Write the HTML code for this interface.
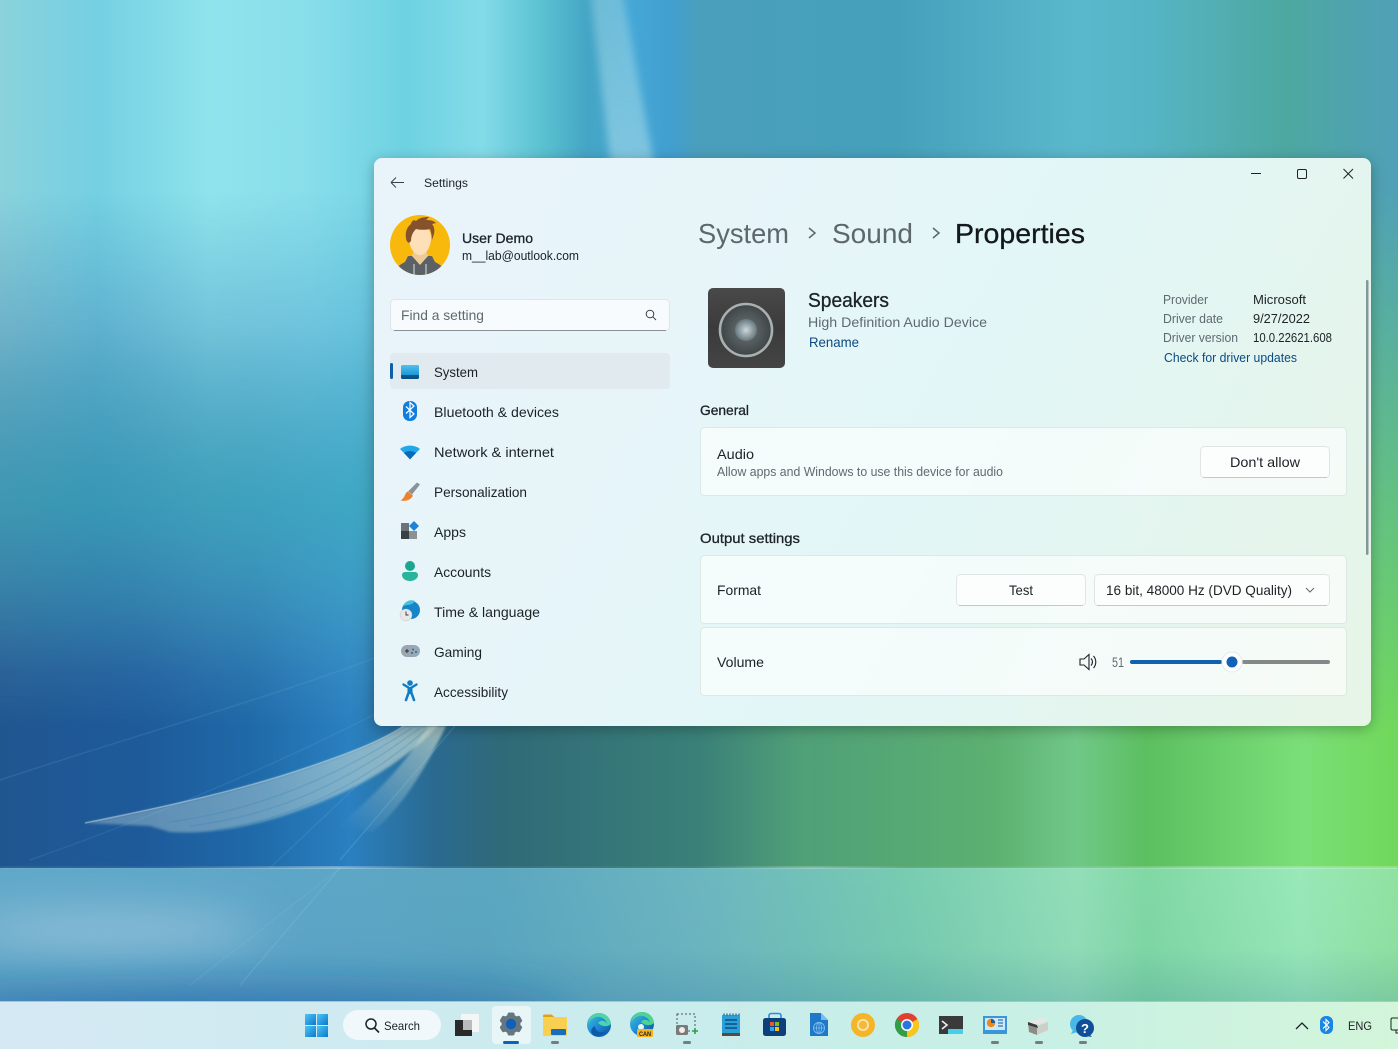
<!DOCTYPE html>
<html lang="en"><head><meta charset="utf-8"><title>Settings</title>
<style>
html,body{margin:0;padding:0;width:1398px;height:1049px;overflow:hidden;background:#3a8fb0}
svg{display:block}
text{font-family:"Liberation Sans",sans-serif;font-size:14px;fill:#1c2226}
.n{font-size:14px}
.s{stroke:#1c2226;stroke-width:.3px}
.g{fill:#5f6a70}
.m{font-size:12.5px}
.l{fill:#0b4a82}
.h{font-size:28px}
</style></head><body>
<svg width="1398" height="1049" viewBox="0 0 1398 1049" xmlns="http://www.w3.org/2000/svg">
<defs>
<linearGradient id="top" gradientUnits="userSpaceOnUse" x1="0" y1="0" x2="1398" y2="0">
<stop offset="0" stop-color="#8ad2dc"/><stop offset=".07" stop-color="#74d0e2"/><stop offset=".15" stop-color="#8fe4ec"/><stop offset=".22" stop-color="#88deea"/><stop offset=".29" stop-color="#6ed2e2"/><stop offset=".345" stop-color="#84dbe8"/><stop offset=".39" stop-color="#58c0d0"/><stop offset=".42" stop-color="#45a5c5"/><stop offset=".45" stop-color="#45a8d6"/><stop offset=".48" stop-color="#429fd0"/><stop offset=".5" stop-color="#4a9fbc"/><stop offset=".64" stop-color="#45a0bb"/><stop offset=".77" stop-color="#5ab8cc"/><stop offset=".82" stop-color="#56b5c5"/><stop offset=".92" stop-color="#4da8a0"/><stop offset="1" stop-color="#50a0b8"/>
</linearGradient>
<linearGradient id="bot" gradientUnits="userSpaceOnUse" x1="0" y1="0" x2="1398" y2="0">
<stop offset="0" stop-color="#205690"/><stop offset=".1" stop-color="#1e5a9a"/><stop offset=".18" stop-color="#1f69a8"/><stop offset=".25" stop-color="#2a80c0"/><stop offset=".31" stop-color="#2a6a90"/><stop offset=".36" stop-color="#2f6a78"/><stop offset=".5" stop-color="#3a8078"/><stop offset=".57" stop-color="#4f9f78"/><stop offset=".71" stop-color="#5cb070"/><stop offset=".77" stop-color="#70c888"/><stop offset=".82" stop-color="#5cbf60"/><stop offset=".93" stop-color="#7adf78"/><stop offset="1" stop-color="#70d85a"/>
</linearGradient>
<linearGradient id="lowr" gradientUnits="userSpaceOnUse" x1="0" y1="0" x2="1398" y2="0">
<stop offset="0" stop-color="#60a8c8"/><stop offset=".2" stop-color="#5ea6c8"/><stop offset=".35" stop-color="#5ba6c0"/><stop offset=".5" stop-color="#6cb6c0"/><stop offset=".65" stop-color="#78ccb0"/><stop offset=".77" stop-color="#92deb8"/><stop offset=".82" stop-color="#80d8a4"/><stop offset=".93" stop-color="#98e8b8"/><stop offset="1" stop-color="#90e2a0"/>
</linearGradient>
<linearGradient id="fade" x1="0" y1="0" x2="0" y2="1"><stop offset=".22" stop-color="#fff"/><stop offset=".84" stop-color="#000"/></linearGradient>
<mask id="mk" maskUnits="userSpaceOnUse" x="0" y="0" width="1398" height="868"><rect width="1398" height="868" fill="url(#fade)"/></mask>
<linearGradient id="lowv" x1="0" y1="0" x2="0" y2="1"><stop offset="0" stop-color="#0a4a90" stop-opacity="0"/><stop offset=".6" stop-color="#0a4a90" stop-opacity=".02"/><stop offset="1" stop-color="#0a4a90" stop-opacity=".16"/></linearGradient>
<linearGradient id="hz" gradientUnits="userSpaceOnUse" x1="0" y1="0" x2="1398" y2="0"><stop offset="0" stop-color="#fff" stop-opacity=".12"/><stop offset=".12" stop-color="#fff" stop-opacity=".12"/><stop offset=".24" stop-color="#fff" stop-opacity=".7"/><stop offset=".31" stop-color="#fff" stop-opacity=".12"/><stop offset=".5" stop-color="#fff" stop-opacity=".1"/><stop offset=".58" stop-color="#fff" stop-opacity=".5"/><stop offset=".65" stop-color="#fff" stop-opacity=".1"/><stop offset=".77" stop-color="#fff" stop-opacity=".15"/><stop offset=".85" stop-color="#fff" stop-opacity=".5"/><stop offset="1" stop-color="#fff" stop-opacity=".45"/></linearGradient>
<linearGradient id="win" gradientUnits="userSpaceOnUse" x1="374" y1="158" x2="1371" y2="726"><stop offset="0" stop-color="#e8f4fa"/><stop offset=".3" stop-color="#e7f5f9"/><stop offset=".55" stop-color="#e2f6f7"/><stop offset=".85" stop-color="#e5f5ec"/><stop offset="1" stop-color="#e6f5e6"/></linearGradient>
<linearGradient id="tb" gradientUnits="userSpaceOnUse" x1="0" y1="0" x2="1398" y2="0"><stop offset="0" stop-color="#d5e9f4"/><stop offset=".5" stop-color="#c9ecec"/><stop offset=".75" stop-color="#c8f0e4"/><stop offset="1" stop-color="#d3f5da"/></linearGradient>
<linearGradient id="wing" gradientUnits="userSpaceOnUse" x1="90" y1="825" x2="430" y2="730"><stop offset="0" stop-color="#b0ccd4" stop-opacity=".4"/><stop offset=".5" stop-color="#a8c8d0" stop-opacity=".55"/><stop offset="1" stop-color="#c4d8d0" stop-opacity=".72"/></linearGradient>
<linearGradient id="wing2" gradientUnits="userSpaceOnUse" x1="350" y1="825" x2="440" y2="730"><stop offset="0" stop-color="#c0e0e8" stop-opacity=".02"/><stop offset="1" stop-color="#d0e0d0" stop-opacity=".65"/></linearGradient>
<linearGradient id="midv" x1="0" y1="0" x2="0" y2="1"><stop offset="0" stop-color="#2ca8b4" stop-opacity="0"/><stop offset=".5" stop-color="#2ca8b4" stop-opacity=".45"/><stop offset="1" stop-color="#2ca8b4" stop-opacity="0"/></linearGradient>
<linearGradient id="stk" x1="0" y1="0" x2="0" y2="1"><stop offset="0" stop-color="#a8dbe8" stop-opacity=".4"/><stop offset="1" stop-color="#a8dbe8" stop-opacity=".6"/></linearGradient>
<filter id="b2"><feGaussianBlur stdDeviation="1.2"/></filter>
<filter id="b4" x="-80%" y="-5%" width="260%" height="110%"><feGaussianBlur stdDeviation="4"/></filter>
<filter id="b30" x="-30%" y="-150%" width="160%" height="400%"><feGaussianBlur stdDeviation="22"/></filter>
<filter id="sh" x="-5%" y="-5%" width="110%" height="112%"><feDropShadow dx="0" dy="3" stdDeviation="7" flood-color="#000" flood-opacity=".28"/></filter>
<radialGradient id="cone" cx=".5" cy=".5" r=".5"><stop offset="0" stop-color="#ccd8dc"/><stop offset="1" stop-color="#67787e"/></radialGradient>
<radialGradient id="spk" cx=".5" cy=".5" r=".5"><stop offset="0" stop-color="#6b7477"/><stop offset="1" stop-color="#3f4446"/></radialGradient>
<linearGradient id="spb" x1="0" y1="0" x2="0" y2="1"><stop offset="0" stop-color="#4a4949"/><stop offset=".5" stop-color="#3c3b3b"/><stop offset="1" stop-color="#444"/></linearGradient>
<linearGradient id="sys" x1="0" y1="0" x2="0" y2="1"><stop offset="0" stop-color="#4cc2ec"/><stop offset=".72" stop-color="#1f97d6"/><stop offset=".73" stop-color="#0d5a97"/><stop offset="1" stop-color="#0b4c82"/></linearGradient>
<linearGradient id="win11" x1="0" y1="0" x2="1" y2="1"><stop offset="0" stop-color="#4ec6f2"/><stop offset="1" stop-color="#0b78d0"/></linearGradient>
<linearGradient id="edge" x1="0" y1="0" x2="1" y2="1"><stop offset="0" stop-color="#45c7d0"/><stop offset=".5" stop-color="#1c8bd8"/><stop offset="1" stop-color="#0a4f9e"/></linearGradient>
</defs>

<!-- wallpaper -->
<rect width="1398" height="868" fill="url(#bot)"/>
<rect width="1398" height="868" fill="url(#top)" mask="url(#mk)"/>
<rect x="0" y="330" width="400" height="340" fill="url(#midv)"/>
<path d="M590 -10 L622 -10 L656 175 L612 175 Z" fill="url(#stk)" filter="url(#b4)"/>
<path d="M0 780 C150 730 300 690 420 640" stroke="#6ab8e0" stroke-opacity=".16" fill="none" stroke-width="1.5"/>
<path d="M30 860 C200 800 330 740 440 680" stroke="#6ab8e0" stroke-opacity=".14" fill="none" stroke-width="1.5"/>
<!-- wings -->
<path d="M85 823 C170 806 240 790 300 770 C345 755 380 742 404 726 L438 726 C410 755 370 785 300 810 C260 825 210 835 170 832 L150 826 Z" fill="url(#wing)" filter="url(#b2)"/>
<g stroke="#2a80b8" stroke-opacity=".22" fill="none" stroke-width="1.5"><path d="M170 822 C260 810 340 775 412 728"/><path d="M190 826 C280 815 350 780 420 728"/><path d="M215 830 C295 818 362 785 428 728"/></g>
<path d="M85 823 C170 806 240 790 300 770 C345 755 380 742 404 726" stroke="#c8dce4" stroke-opacity=".5" fill="none" stroke-width="1.5"/>
<path d="M428 726 L446 726 C425 770 400 810 372 832 L338 826 C375 795 405 765 428 726 Z" fill="url(#wing2)" filter="url(#b2)"/>
<path d="M455 726 L340 860" stroke="#8fd0e8" stroke-opacity=".22" fill="none" stroke-width="1.2"/>
<path d="M420 726 L270 868" stroke="#8fd0e8" stroke-opacity=".14" fill="none" stroke-width="1.2"/>
<!-- lower half -->
<rect y="868" width="1398" height="134" fill="url(#lowr)"/>
<rect y="868" width="1398" height="134" fill="url(#lowv)"/>
<ellipse cx="230" cy="1015" rx="340" ry="26" fill="#1f62a8" fill-opacity=".55" filter="url(#b30)"/>
<ellipse cx="110" cy="930" rx="150" ry="20" fill="#b8d5e8" fill-opacity=".55" filter="url(#b30)"/>
<path d="M340 868 L190 985" stroke="#9ad8ee" stroke-opacity=".1" fill="none" stroke-width="1.5"/>
<path d="M340 868 L240 985" stroke="#a8dcee" stroke-opacity=".14" fill="none" stroke-width="1.5"/>
<rect y="866.500" width="1398" height="2" fill="url(#hz)" filter="url(#b2)"/>

<!-- taskbar -->
<rect y="1001" width="1398" height="48" fill="url(#tb)"/>
<rect y="1001" width="1398" height="1" fill="#7fa8b8" fill-opacity=".55"/>
<!-- start -->
<g fill="url(#win11)"><rect x="305" y="1014" width="11" height="11"/><rect x="317" y="1014" width="11" height="11"/><rect x="305" y="1026" width="11" height="11"/><rect x="317" y="1026" width="11" height="11"/></g>
<rect x="343" y="1010" width="98" height="30" rx="15" fill="#f0f8fb"/>
<circle cx="371" cy="1024" r="5" fill="none" stroke="#1c2226" stroke-width="1.5"/><path d="M374.500 1028 L379 1032.500" stroke="#1c2226" stroke-width="1.6"/>
<text x="384" y="1030" style="font-size:12px" textLength="36" lengthAdjust="spacingAndGlyphs">Search</text>
<!-- task view -->
<rect x="461" y="1014" width="18" height="18" fill="#f4f6f6"/><rect x="455" y="1020" width="17" height="16" fill="#2a2a2a"/><rect x="463" y="1020" width="9" height="10" fill="#b8bcbe"/>
<!-- settings -->
<rect x="492" y="1006" width="39" height="38" rx="4" fill="#fff" fill-opacity=".55"/>
<g transform="translate(511 1024)"><circle r="9.500" fill="#667680"/><g fill="#667680"><rect x="-3.600" y="-11.500" width="7.200" height="23" rx="2"/><rect x="-3.600" y="-11.500" width="7.200" height="23" rx="2" transform="rotate(60)"/><rect x="-3.600" y="-11.500" width="7.200" height="23" rx="2" transform="rotate(120)"/></g><circle r="5.200" fill="#1160b5"/></g>
<rect x="503" y="1041" width="16" height="3" rx="1.500" fill="#0f62b8"/>
<!-- folder -->
<path d="M543 1016 a1.500 1.500 0 0 1 1.500-1.500 h7 l3 2.500 h-11.500z" fill="#e3a010"/><rect x="543" y="1017" width="24" height="19" rx="1.500" fill="#f8cf4f"/><rect x="551" y="1029" width="15" height="6" rx="1" fill="#1a6db8"/>
<rect x="551" y="1041" width="8" height="3" rx="1.500" fill="#6f7f85"/>
<!-- edge -->
<circle cx="599" cy="1025" r="12" fill="url(#edge)"/><path d="M599 1013 a12 12 0 0 1 12 11 c-3 3-9 3-13-1 c3-4 8-2 9 1 c-1-5-6-8-11-7 c-4 1-7 4-8 7 c1-6 5-11 11-11z" fill="#4fd4a6"/><path d="M595 1026 c0 5 5 8 11 5 c-3 5-9 7-13 4 c-3-3-2-7 2-9z" fill="#0d5ba8"/>
<!-- edge can -->
<circle cx="642" cy="1024" r="12" fill="url(#edge)"/><path d="M642 1012 a12 12 0 0 1 12 11 c-3 3-9 3-13-1 c3-4 8-2 9 1 c-1-5-6-8-11-7 c-4 1-7 4-8 7 c1-6 5-11 11-11z" fill="#4fd48f"/><circle cx="641" cy="1027" r="3" fill="#e9f4f0"/>
<rect x="637" y="1029" width="16" height="8" rx="1" fill="#f5b21a"/><text x="639" y="1036" style="font-size:6.500px;font-weight:bold" textLength="12" lengthAdjust="spacingAndGlyphs">CAN</text>
<!-- snip -->
<rect x="677" y="1014" width="18" height="17" fill="none" stroke="#555" stroke-width="1" stroke-dasharray="2 2"/><rect x="676" y="1025" width="12" height="10" rx="1.500" fill="#7a7a7a"/><circle cx="682" cy="1030" r="3" fill="#eee"/><path d="M692 1031 h6 M695 1028 v6" stroke="#2e9e4f" stroke-width="1.600"/>
<rect x="683" y="1041" width="8" height="3" rx="1.500" fill="#6f7f85"/>
<!-- notepad -->
<rect x="722" y="1015" width="18" height="20" rx="1" fill="#2aa0d8"/><rect x="722" y="1033" width="18" height="3" fill="#5a4a3a"/><path d="M725 1020h12M725 1024h12M725 1028h12" stroke="#0c4f80" stroke-width="1.600"/><path d="M724 1013.500v2M727 1013.500v2M730 1013.500v2M733 1013.500v2M736 1013.500v2M739 1013.500v2" stroke="#1b5f90" stroke-width="1.200"/>
<!-- store -->
<path d="M769 1018v-2.500a2 2 0 0 1 2-2h8a2 2 0 0 1 2 2v2.500" fill="none" stroke="#2d8bd8" stroke-width="1.600"/><rect x="763" y="1018" width="23" height="18" rx="2.500" fill="#0f3f7a"/><rect x="770" y="1022" width="4" height="4" fill="#ea5a2a"/><rect x="775" y="1022" width="4" height="4" fill="#7fba20"/><rect x="770" y="1027" width="4" height="4" fill="#2aa8e8"/><rect x="775" y="1027" width="4" height="4" fill="#f8c010"/>
<!-- file -->
<path d="M810 1013h11l7 7v16h-18z" fill="#1f78c8"/><path d="M821 1013l7 7h-7z" fill="#7bbbe8"/><circle cx="819" cy="1028" r="5.500" fill="none" stroke="#7fc0ee" stroke-width=".9"/><path d="M813.500 1028h11M819 1022.500v11" stroke="#7fc0ee" stroke-width=".8"/><ellipse cx="819" cy="1028" rx="2.500" ry="5.500" fill="none" stroke="#7fc0ee" stroke-width=".8"/>
<!-- canary -->
<circle cx="863" cy="1025" r="12" fill="#f5b52a"/><circle cx="863" cy="1025" r="6" fill="#fce5a0"/><circle cx="863" cy="1025" r="4.200" fill="#f3b842"/>
<!-- chrome -->
<circle cx="907" cy="1025" r="12" fill="#e04030"/><path d="M907 1025 L896.600 1019 A12 12 0 0 0 907 1037 Z" fill="#2f9e48"/><path d="M907 1025 L917.400 1019 A12 12 0 0 1 907 1037 Z" fill="#f8c818"/><circle cx="907" cy="1025" r="6" fill="#fff"/><circle cx="907" cy="1025" r="4.500" fill="#2a74e0"/>
<!-- terminal -->
<rect x="939" y="1016" width="24" height="18" fill="#3a3a3a"/><rect x="948" y="1029" width="15" height="5" fill="#46cfe8"/><path d="M942 1021l5 4-5 4" fill="none" stroke="#eee" stroke-width="1.600"/>
<!-- control panel -->
<rect x="983" y="1016" width="24" height="18" fill="#3a96d8"/><rect x="985" y="1018" width="20" height="12" fill="#cfe8f8"/><circle cx="991" cy="1023" r="4.200" fill="#e88a20"/><path d="M991 1023v-4.200a4.200 4.200 0 0 1 4.200 4.200z" fill="#1b5f9f"/><path d="M998 1020h5M998 1023h5M998 1026h5" stroke="#2a78b8" stroke-width="1.200"/>
<rect x="991" y="1041" width="8" height="3" rx="1.500" fill="#6f7f85"/>
<!-- 1039 -->
<path d="M1028 1022 l14 -5 l7 3 l-14 5z" fill="#e6e6e2"/><path d="M1028 1022 l9 4 v9 l-8 -3z" fill="#8c8c88"/><path d="M1037 1026 l11 -4 v8 l-11 5z" fill="#cfcfca"/><path d="M1028 1022 l9 3 l1 3 l-10 -3z" fill="#3a3a3a"/>
<rect x="1035" y="1041" width="8" height="3" rx="1.500" fill="#6f7f85"/>
<!-- help -->
<circle cx="1079" cy="1024" r="9" fill="#4ab8e6"/><path d="M1073 1030l-2 4 6-2z" fill="#4ab8e6"/><circle cx="1085" cy="1028" r="9" fill="#0f4f9a"/><path d="M1089 1034l3 3-6-1z" fill="#0f4f9a"/><text x="1081" y="1033" style="font-size:13px;font-weight:bold;fill:#fff">?</text>
<rect x="1079" y="1041" width="8" height="3" rx="1.500" fill="#6f7f85"/>
<!-- tray -->
<path d="M1296 1029l6-6 6 6" fill="none" stroke="#1c2226" stroke-width="1.300"/>
<rect x="1320" y="1016" width="13" height="18" rx="6" fill="#1b86e2"/><path d="M1323 1021.500l6 6-3 3v-11l3 3-6 6" fill="none" stroke="#fff" stroke-width="1.100"/>
<text x="1348" y="1030" style="font-size:12px" textLength="24" lengthAdjust="spacingAndGlyphs">ENG</text>
<rect x="1391" y="1018" width="12" height="12" rx="1.500" fill="none" stroke="#1c2226" stroke-width="1"/><path d="M1396 1030v3h8" fill="none" stroke="#1c2226" stroke-width="1"/>

<!-- window -->
<rect x="374" y="158" width="997" height="568" rx="8" fill="url(#win)" filter="url(#sh)"/>
<path d="M391 182.500h13M391 182.500l5-5M391 182.500l5 5" fill="none" stroke="#3a4246" stroke-width="1"/>
<text x="424" y="187" style="font-size:12px" textLength="44" lengthAdjust="spacingAndGlyphs">Settings</text>
<path d="M1251 173.500h10" stroke="#1c2226" stroke-width="1"/><rect x="1297.500" y="169.500" width="9" height="9" rx="1.500" fill="none" stroke="#1c2226" stroke-width="1"/><path d="M1343.500 169l9.500 9.500M1353 169l-9.500 9.500" stroke="#1c2226" stroke-width="1"/>

<!-- avatar -->
<circle cx="420" cy="245" r="30" fill="#f8b80c"/>
<clipPath id="av"><circle cx="420" cy="245" r="30"/></clipPath>
<g clip-path="url(#av)">
<path d="M394 276c1-8 5-11 11-14l3-6 24 0 3 6c6 3 10 6 11 14l-2 4h-48z" fill="#5c6165"/>
<path d="M412 256l8 9 8-9-2-6h-12z" fill="#eccb98"/>
<path d="M414 264v11M426 264v11" stroke="#c8ccce" stroke-width="1.200"/>
<path d="M409 238c0-8 4-12 11-12s11 4 11 12c0 9-5 17-11 17s-11-8-11-17z" fill="#fde0b8"/>
<path d="M409 243c-2-1-3-3-3-5c-1-6 1-11 5-14c0-1 1-3 3-4l2 1c3-3 7-4 13-4l-3 3c5 0 8 1 10 3l-4 1c2 2 3 6 2 10l-2 6c0-4-1-8-2-11c-4 1-10 1-14 0c-3 3-5 7-5 12z" fill="#85522c"/>
</g>
<text x="462" y="243" class="s" textLength="71" lengthAdjust="spacingAndGlyphs">User Demo</text>
<text x="462" y="260" style="font-size:12.500px" textLength="117" lengthAdjust="spacingAndGlyphs">m__lab@outlook.com</text>

<!-- search -->
<rect x="390.500" y="299.500" width="279" height="31" rx="4" fill="#f7fbfd" stroke="#dde6ea"/>
<path d="M394 330.500h272" stroke="#8a9297" stroke-width="1"/>
<text x="401" y="320" class="g" textLength="83" lengthAdjust="spacingAndGlyphs">Find a setting</text>
<circle cx="650" cy="314" r="3.800" fill="none" stroke="#3a4246" stroke-width="1"/><path d="M652.800 316.800l3.200 3.200" stroke="#3a4246" stroke-width="1"/>

<!-- nav -->
<rect x="390" y="353" width="280" height="36" rx="4" fill="#e1ebef"/>
<rect x="390" y="363" width="3" height="16" rx="1.500" fill="#0f5fa8"/>
<rect x="401" y="365" width="18" height="14" rx="1.500" fill="url(#sys)"/>
<text x="434" y="377" textLength="44" lengthAdjust="spacingAndGlyphs">System</text>
<rect x="403" y="401" width="14" height="20" rx="6.500" fill="#0f7ee0"/><path d="M406 406.500l8 7.500-4 3.500v-15l4 3.500-8 7.500" fill="none" stroke="#fff" stroke-width="1.200"/>
<text x="434" y="417" textLength="125" lengthAdjust="spacingAndGlyphs">Bluetooth &amp; devices</text>
<path d="M400 449c5-4.500 15-4.500 20 0l-10 10z" fill="#20a8e8"/><path d="M404 453c3.500-2.500 8.500-2.500 12 0l-6 6.500z" fill="#0a6ab8"/>
<text x="434" y="457" textLength="120" lengthAdjust="spacingAndGlyphs">Network &amp; internet</text>
<path d="M417 482.500l3 2-8 10-4-3z" fill="#8c9398"/><path d="M407.500 491.500c-3 2-2 6-7 9c5 1 10 0 12.500-5z" fill="#f0812a"/>
<text x="434" y="497" textLength="93" lengthAdjust="spacingAndGlyphs">Personalization</text>
<rect x="401" y="523" width="8" height="8" fill="#6a7478"/><rect x="401" y="531" width="8" height="8" fill="#3a3f42"/><rect x="409" y="531" width="8" height="8" fill="#8a9296"/><path d="M414 521l5 5-5 5-5-5z" fill="#1d82d8"/>
<text x="434" y="537" textLength="32" lengthAdjust="spacingAndGlyphs">Apps</text>
<circle cx="410" cy="566" r="5" fill="#1ea58f"/><path d="M402 575a3 3 0 0 1 3-3h10a3 3 0 0 1 3 3c0 3-3 6-8 6s-8-3-8-6z" fill="#28b59c"/>
<text x="434" y="577" textLength="57" lengthAdjust="spacingAndGlyphs">Accounts</text>
<circle cx="411" cy="610" r="9" fill="#1786c8"/><path d="M403 606a9 9 0 0 1 12-5c-2 3-5 4-8 4z" fill="#45c0e0"/><circle cx="406" cy="615" r="6" fill="#e8e8e8" stroke="#c4c4c4" stroke-width=".5"/><path d="M406 611.500v3.500h2.500" stroke="#333" fill="none" stroke-width=".9"/>
<text x="434" y="617" textLength="106" lengthAdjust="spacingAndGlyphs">Time &amp; language</text>
<rect x="401" y="645" width="19" height="12" rx="6" fill="#9aa6b2"/><path d="M405 651h4M407 649v4" stroke="#2a3036" stroke-width="1"/><circle cx="413" cy="649.500" r="1" fill="#1d6fb8"/><circle cx="416" cy="652" r="1" fill="#1d6fb8"/><circle cx="412" cy="653" r="1" fill="#1d6fb8"/>
<text x="434" y="657" textLength="48" lengthAdjust="spacingAndGlyphs">Gaming</text>
<circle cx="410" cy="683" r="2.800" fill="#0f7cc8"/><path d="M403.500 684.500l6.500 4 6.500-4" fill="none" stroke="#0f7cc8" stroke-width="2.400" stroke-linecap="round"/><rect x="407.500" y="687" width="5" height="7" fill="#0f7cc8"/><path d="M408.500 693l-2.500 7M411.500 693l2.500 7" fill="none" stroke="#0f7cc8" stroke-width="2.600" stroke-linecap="round"/>
<text x="434" y="697" textLength="74" lengthAdjust="spacingAndGlyphs">Accessibility</text>

<!-- breadcrumb -->
<text x="698" y="243" class="h" style="fill:#5d676c" textLength="91" lengthAdjust="spacingAndGlyphs">System</text>
<path d="M809 228l6 5-6 5" fill="none" stroke="#5d676c" stroke-width="1.500"/>
<text x="832" y="243" class="h" style="fill:#5d676c" textLength="81" lengthAdjust="spacingAndGlyphs">Sound</text>
<path d="M933 228l6 5-6 5" fill="none" stroke="#5d676c" stroke-width="1.500"/>
<text x="955" y="243" class="h" style="fill:#14181b;stroke:#14181b;stroke-width:.3px" textLength="130" lengthAdjust="spacingAndGlyphs">Properties</text>

<!-- speaker -->
<rect x="708" y="288" width="77" height="80" rx="5" fill="url(#spb)"/>
<circle cx="746" cy="330" r="26" fill="url(#spk)" stroke="#a9b0b2" stroke-width="2.600"/>
<circle cx="746" cy="330" r="11" fill="url(#cone)"/>
<text x="808" y="307" class="s" style="font-size:20px" textLength="81" lengthAdjust="spacingAndGlyphs">Speakers</text>
<text x="808" y="327" class="g" textLength="179" lengthAdjust="spacingAndGlyphs">High Definition Audio Device</text>
<text x="809" y="347" class="l" textLength="50" lengthAdjust="spacingAndGlyphs">Rename</text>

<text x="1163" y="304" class="g m" textLength="45" lengthAdjust="spacingAndGlyphs">Provider</text>
<text x="1163" y="323" class="g m" textLength="60" lengthAdjust="spacingAndGlyphs">Driver date</text>
<text x="1163" y="342" class="g m" textLength="75" lengthAdjust="spacingAndGlyphs">Driver version</text>
<text x="1253" y="304" class="m" textLength="53" lengthAdjust="spacingAndGlyphs">Microsoft</text>
<text x="1253" y="323" class="m" textLength="57" lengthAdjust="spacingAndGlyphs">9/27/2022</text>
<text x="1253" y="342" class="m" textLength="79" lengthAdjust="spacingAndGlyphs">10.0.22621.608</text>
<text x="1164" y="362" class="m l" textLength="133" lengthAdjust="spacingAndGlyphs">Check for driver updates</text>

<!-- scrollbar -->
<rect x="1366" y="280" width="2.500" height="275" rx="1.200" fill="#84989a"/>

<!-- general -->
<text x="700" y="415" class="s" textLength="49" lengthAdjust="spacingAndGlyphs">General</text>
<rect x="700.500" y="427.500" width="646" height="68" rx="4" fill="#fff" fill-opacity=".62" stroke="#dce8e8"/>
<text x="717" y="459" textLength="37" lengthAdjust="spacingAndGlyphs">Audio</text>
<text x="717" y="476" class="g m" textLength="286" lengthAdjust="spacingAndGlyphs">Allow apps and Windows to use this device for audio</text>
<rect x="1200.500" y="446.500" width="129" height="31" rx="4" fill="#fcfefe" stroke="#e0e6e6"/><path d="M1203 477.500h124" stroke="#c3c9c9"/>
<text x="1230" y="467" textLength="70" lengthAdjust="spacingAndGlyphs">Don't allow</text>

<!-- output -->
<text x="700" y="543" class="s" textLength="100" lengthAdjust="spacingAndGlyphs">Output settings</text>
<rect x="700.500" y="555.500" width="646" height="68" rx="4" fill="#fff" fill-opacity=".62" stroke="#dce8e4"/>
<text x="717" y="595" textLength="44" lengthAdjust="spacingAndGlyphs">Format</text>
<rect x="956.500" y="574.500" width="129" height="31" rx="4" fill="#fcfefd" stroke="#e0e6e4"/><path d="M959 605.500h124" stroke="#c3c9c7"/>
<text x="1009" y="595" textLength="24" lengthAdjust="spacingAndGlyphs">Test</text>
<rect x="1094.500" y="574.500" width="235" height="31" rx="4" fill="#fcfefd" stroke="#e0e6e4"/><path d="M1097 605.500h230" stroke="#c3c9c7"/>
<text x="1106" y="595" textLength="186" lengthAdjust="spacingAndGlyphs">16 bit, 48000 Hz (DVD Quality)</text>
<path d="M1306 588l4 4 4-4" fill="none" stroke="#5d676c" stroke-width="1"/>

<rect x="700.500" y="627.500" width="646" height="68" rx="4" fill="#fff" fill-opacity=".62" stroke="#dce8e2"/>
<text x="717" y="667" textLength="47" lengthAdjust="spacingAndGlyphs">Volume</text>
<path d="M1080 659h4l5-4.500v15l-5-4.500h-4z" fill="none" stroke="#1c2226" stroke-width="1.100"/><path d="M1091 658.500a5 5 0 0 1 0 7M1093.500 656a9 9 0 0 1 0 12" fill="none" stroke="#1c2226" stroke-width="1.100"/>
<text x="1112" y="667" class="g" textLength="12" lengthAdjust="spacingAndGlyphs">51</text>
<rect x="1130" y="660" width="92" height="4" rx="2" fill="#0f62b0"/>
<rect x="1242" y="660" width="88" height="4" rx="2" fill="#848888"/>
<circle cx="1232" cy="662" r="10" fill="#fff" stroke="#e4eaea" stroke-width="1"/>
<circle cx="1232" cy="662" r="5.500" fill="#0f62b8"/>
</svg>
</body></html>
